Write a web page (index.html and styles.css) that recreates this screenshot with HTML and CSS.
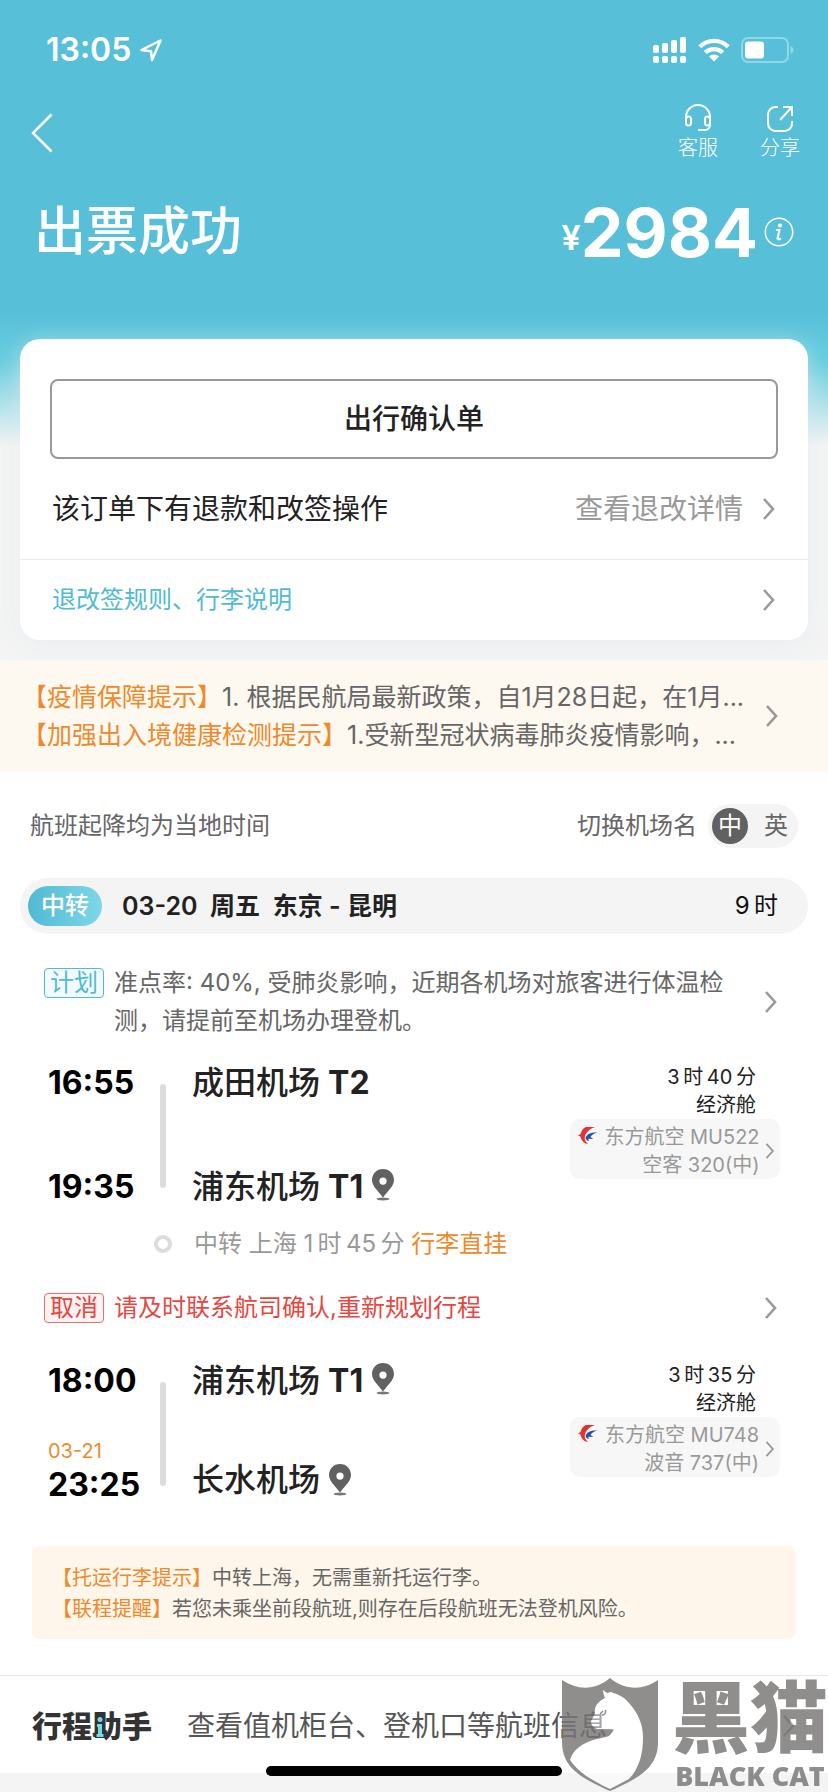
FILE: index.html
```html
<!DOCTYPE html>
<html lang="zh-CN">
<head>
    <meta charset="UTF-8">
    <meta name="viewport" content="width=device-width, initial-scale=1.0">
    <title>出票成功</title>
    <link rel="stylesheet" href="styles.css">
</head>
<body>

<!-- Shared icons -->
<svg class="sprite" aria-hidden="true">
    <symbol id="arrow" viewBox="0 0 14 24"><path d="M2 2l9 10-9 10" fill="none" stroke="#999" stroke-width="2.6"/></symbol>
    <symbol id="pin" viewBox="0 0 24 32">
        <path d="M12 0C5.600 0 1 4.800 1 11c0 6.500 6.500 11 11 17.500C16.500 22 23 17.500 23 11 23 4.800 18.400 0 12 0zm0 8.500a3.600 3.600 0 1 1 0 7.200 3.600 3.600 0 0 1 0-7.200z" fill="#616161" fill-rule="evenodd"/>
        <ellipse cx="12" cy="30" rx="6.500" ry="1.500" fill="#777"/>
    </symbol>
    <symbol id="airline" viewBox="0 0 22 20">
        <path d="M18 1H9C6 2 4.500 5 3.500 8L1 9.500l2.500 1C4 14.500 7 17.500 11 18c-2.500-2-4-5-3-8C9 6.500 13 2.500 18 1z" fill="#e5322d"/>
        <path d="M21 6.500c-6-.5-11 1-12.500 5.500.5 2 2 3 4 3-1.500-1-1.500-2-.5-2.500 1 .5 3 .5 4.500 0-1.500-.2-2.500-1-3-1.500 1.500-2.500 4-4 7.500-4.500z" fill="#2a4da3"/>
    </symbol>
</svg>

<div class="top">
    <!-- Status bar -->
    <div class="status-bar">
        <span class="clock">13:05</span>
        <svg width="24" height="24" viewBox="0 0 24 24"><path d="M21.500 2.500L2.500 12l9.500 1.200L13 22z" fill="none" stroke="#fff" stroke-width="2.500" stroke-linejoin="round"/></svg>
        <div class="status-icons">
            <svg width="34" height="28" viewBox="0 0 34 28" fill="#fff">
                <rect x="0" y="9" width="6" height="8" rx="2"/><rect x="9" y="7" width="6" height="10" rx="2"/><rect x="18" y="4" width="6" height="13" rx="2"/><rect x="27" y="1" width="6" height="16" rx="2"/>
                <rect x="0" y="20" width="6" height="7" rx="2"/><rect x="9" y="20" width="6" height="7" rx="2"/><rect x="18" y="20" width="6" height="7" rx="2"/><rect x="27" y="20" width="6" height="7" rx="2"/>
            </svg>
            <svg width="32" height="24" viewBox="0 0 32 24" fill="none" stroke="#fff" stroke-width="4.200">
                <path d="M1.800 8.800a20 20 0 0 1 28.400 0"/><path d="M7.300 14.600a12.500 12.500 0 0 1 17.400 0"/>
                <path d="M16 23.500l-5-5a7 7 0 0 1 10 0z" fill="#fff" stroke="none"/>
            </svg>
            <svg width="54" height="26" viewBox="0 0 54 26">
                <rect x="1" y="1" width="46" height="24" rx="6" fill="none" stroke="#8fd8e8" stroke-width="2"/>
                <rect x="4" y="4.500" width="19" height="17" rx="3" fill="#fff"/>
                <path d="M49.500 9c4 1.500 4 6.500 0 8z" fill="#8fd8e8"/>
            </svg>
        </div>
    </div>

    <nav class="nav">
        <button class="back" aria-label="返回">
            <svg width="24" height="40" viewBox="0 0 24 40"><path d="M21.500 1.500L3 20l18.500 18.500" fill="none" stroke="#fff" stroke-width="2.500"/></svg>
        </button>
        <button class="nav-btn">
            <svg width="28" height="28" viewBox="0 0 28 28" fill="none" stroke="#fff" stroke-width="2">
                <path d="M2 17v-4a12 12 0 0 1 24 0v8a5 5 0 0 1-5 5h-7"/>
                <rect x="2" y="12.500" width="5" height="9" rx="2.500"/><rect x="21" y="12.500" width="5" height="9" rx="2.500"/>
            </svg>
            <span>客服</span>
        </button>
        <button class="nav-btn">
            <svg width="28" height="28" viewBox="0 0 28 28" fill="none" stroke="#fff" stroke-width="2">
                <path d="M12 3H9.500A7.500 7.500 0 0 0 2 10.500v9A7.500 7.500 0 0 0 9.500 27h9a7.500 7.500 0 0 0 7.500-7.500V17"/>
                <path d="M17 3h9v9M26 3L14 16"/>
            </svg>
            <span>分享</span>
        </button>
    </nav>

    <header class="headline">
        <h1>出票成功</h1>
        <div class="price"><span class="yen">¥</span>2984</div>
        <button class="info" aria-label="价格说明">
            <svg width="30" height="30" viewBox="0 0 30 30" fill="none" stroke="#fff">
                <circle cx="15" cy="15" r="13.700" stroke-width="1.500"/>
                <circle cx="16" cy="8.500" r="2" fill="#fff" stroke="none"/>
                <path d="M12 13h3.500l-2 8.500q0 1.500 3.500.3" stroke-width="2"/>
            </svg>
        </button>
    </header>

    <section class="card">
        <button class="confirm-btn">出行确认单</button>
        <a class="card-row" href="#refund">
            <span>该订单下有退款和改签操作</span>
            <span class="more">查看退改详情</span>
            <svg class="arrow"><use href="#arrow"/></svg>
        </a>
        <a class="card-row rules" href="#rules">
            <span>退改签规则、行李说明</span>
            <svg class="arrow"><use href="#arrow"/></svg>
        </a>
    </section>
</div>

<a class="notice" href="#notice">
    <div class="notice-text">
        <p><b>【疫情保障提示】</b>1. 根据民航局最新政策，自1月28日起，在1月...</p>
        <p><b>【加强出入境健康检测提示】</b>1.受新型冠状病毒肺炎疫情影响，...</p>
    </div>
    <svg class="arrow"><use href="#arrow"/></svg>
</a>

<main class="flights">
    <div class="tz-row">
        <span>航班起降均为当地时间</span>
        <span class="switch-label">切换机场名</span>
        <div class="switch">
            <button class="active">中</button>
            <button>英</button>
        </div>
    </div>

    <div class="trip">
        <span class="trip-badge">中转</span>
        <h2>03-20&nbsp; 周五&nbsp; 东京 - 昆明</h2>
        <span>9&thinsp;时</span>
    </div>

    <a class="alert" href="#plan">
        <span class="tag">计划</span>
        <p>准点率: 40%, 受肺炎影响，近期各机场对旅客进行体温检测，请提前至机场办理登机。</p>
        <svg class="arrow"><use href="#arrow"/></svg>
    </a>

    <section class="leg">
        <div class="times"><time>16:55</time><time>19:35</time></div>
        <div class="bar"></div>
        <div class="airports">
            <h3>成田机场 <strong>T2</strong></h3>
            <h3>浦东机场 <strong>T1</strong><svg class="pin"><use href="#pin"/></svg></h3>
        </div>
        <div class="detail">
            <p>3&thinsp;时&thinsp;40&thinsp;分</p>
            <p>经济舱</p>
            <a class="plane" href="#mu522">
                <svg class="airline"><use href="#airline"/></svg>
                <span>东方航空 MU522<br>空客 320(中)</span>
                <svg class="arrow small"><use href="#arrow"/></svg>
            </a>
        </div>
    </section>

    <div class="transfer">
        <span class="ring"></span>
        <p>中转 上海 1&thinsp;时&thinsp;45&thinsp;分 <b>行李直挂</b></p>
    </div>

    <a class="alert cancel" href="#cancel">
        <span class="tag">取消</span>
        <p>请及时联系航司确认,重新规划行程</p>
        <svg class="arrow"><use href="#arrow"/></svg>
    </a>

    <section class="leg overnight">
        <div class="times"><time>18:00</time><time><small>03-21</small>23:25</time></div>
        <div class="bar"></div>
        <div class="airports">
            <h3>浦东机场 <strong>T1</strong><svg class="pin"><use href="#pin"/></svg></h3>
            <h3>长水机场<svg class="pin"><use href="#pin"/></svg></h3>
        </div>
        <div class="detail">
            <p>3&thinsp;时&thinsp;35&thinsp;分</p>
            <p>经济舱</p>
            <a class="plane" href="#mu748">
                <svg class="airline"><use href="#airline"/></svg>
                <span>东方航空 MU748<br>波音 737(中)</span>
                <svg class="arrow small"><use href="#arrow"/></svg>
            </a>
        </div>
    </section>

    <div class="tips">
        <p><b>【托运行李提示】</b>中转上海，无需重新托运行李。</p>
        <p><b>【联程提醒】</b>若您未乘坐前段航班,则存在后段航班无法登机风险。</p>
    </div>

    <a class="assistant" href="#assistant">
        <strong>行程<span class="zhu">助<svg width="10" height="22" viewBox="0 0 10 22" fill="#6fdbe9"><rect x="0" y="0" width="10" height="22" fill="#333"/><circle cx="5" cy="3.500" r="2.500"/><path d="M2 8h5v10h1.500v3h-7v-3H3v-7H2z"/></svg></span>手</strong>
        <span>查看值机柜台、登机口等航班信息</span>
        <svg class="arrow"><use href="#arrow"/></svg>
    </a>
</main>

<div class="home-bar"></div>

<!-- Watermark -->
<div class="watermark">
    <svg width="98" height="115" viewBox="0 0 98 115">
        <path d="M42 13l4 3 4-1c9 3 14 6 18 11 8 9 14 20 14 34 0 9-1 16-3 23-3 8-6 14-11 19l-19 11.500C30 104 17 95 9 83c2-7 7-12 12-15 5-3 10-5 15-6 5-1 9-2 12-3 2-2 4-4 4.700-6.700L36 52c-3-1-5-3-6-6 0-4 3-6 4-10-1-6 2-11 10-15-1-3-2-5-2-8z" fill="#fff" fill-opacity=".6"/>
        <path d="M1 3c16 11 34 10 48-2 14 12 32 13 48 2v62c0 24-16 35-48 49C17 100 1 89 1 65zM42 13c0 3 1 5 2 8-8 4-11 9-10 15-1 4-4 6-4 10 1 3 3 5 6 6l16.700.3C52 55 50 57 48 59c-3 1-7 2-12 3-5 1-10 3-15 6-5 3-10 8-12 15 8 12 21 20 40 29l19-10c5-5 8-11 11-19 2-7 3-14 3-23 0-14-6-25-14-34-4-5-9-8-18-11l-4 1z" fill="#787475" fill-rule="evenodd"/>
        <path d="M39 37l3-3M41 38c3 0 4-2 3.500-5" fill="none" stroke="#787475" stroke-width="1.500"/>
    </svg>
    <div class="watermark-text">
        <span class="cn">黑猫</span>
        <span class="en">BLACK CAT</span>
    </div>
</div>

</body>
</html>
```
FILE: styles.css
```css
* {
    box-sizing: border-box;
}

body {
    margin: 0;
    background: #f4f4f4;
    color: #222;
    font-family: Inter, "Noto Sans CJK SC", sans-serif;
    font-size: 24px;
    line-height: 38px;
}

h1, h2, h3, p {
    margin: 0;
}

a {
    color: inherit;
    text-decoration: none;
}

b {
    color: #ee8a2c;
    font-weight: 400;
}

button {
    padding: 0;
    border: none;
    background: none;
    color: inherit;
    font: inherit;
    cursor: pointer;
}

svg {
    display: block;
    flex: none;
}

.sprite {
    position: absolute;
    width: 0;
    height: 0;
}

.arrow {
    width: 14px;
    height: 24px;
}

.arrow.small {
    width: 10px;
    height: 18px;
}

/* Header */
.top {
    padding-bottom: 20px;
    background: linear-gradient(#58bfd9 0, #58bfd9 310px, #66cddf 360px, #f4f4f4 446px);
}

.status-bar {
    display: flex;
    align-items: center;
    gap: 8px;
    padding: 30px 33px 30px 46px;
    color: #fff;
    line-height: 40px;
}

.clock {
    font-size: 32px;
    font-weight: 600;
}

.status-icons {
    display: flex;
    align-items: center;
    gap: 11px;
    margin-left: auto;
}

.nav {
    display: flex;
    align-items: center;
    gap: 42px;
    padding: 4px 28px 28px 30px;
    color: #fff;
}

.back {
    margin-right: auto;
}

.nav-btn {
    display: flex;
    flex-direction: column;
    align-items: center;
    gap: 2px;
    font-size: 20px;
    font-weight: 300;
    line-height: 28px;
}

.headline {
    display: flex;
    align-items: center;
    padding: 0 34px;
    color: #fff;
    line-height: 84px;
}

.headline h1 {
    margin-right: auto;
    font-size: 52px;
    font-weight: 500;
}

.price {
    display: flex;
    align-items: center;
    font-size: 68px;
    font-weight: 700;
}

.yen {
    padding-top: 12px;
    font-size: 34px;
    font-weight: 600;
    line-height: 40px;
}

.info {
    margin-left: 6px;
}

/* Order card */
.card {
    margin: 65px 20px 0;
    border-radius: 20px;
    background: #fff;
    box-shadow: 0 4px 24px rgba(225, 235, 240, .6);
}

.card::before {
    content: "";
    display: block;
    height: 40px;
}

.confirm-btn {
    display: block;
    width: calc(100% - 60px);
    height: 80px;
    margin: 0 30px;
    border: 2px solid #999;
    border-radius: 8px;
    font-size: 28px;
    font-weight: 500;
}

.card-row {
    display: flex;
    align-items: center;
    justify-content: space-between;
    padding: 31px 32px;
    font-size: 28px;
}

.more {
    margin-left: auto;
    margin-right: 19px;
    color: #999;
}

.rules {
    padding: 21px 32px;
    border-top: 1px solid #ebebeb;
    color: #52bad3;
    font-size: 24px;
}

/* Notice */
.notice {
    display: flex;
    align-items: center;
    justify-content: space-between;
    padding: 18px 49px 18px 22px;
    background: #fdf8f0;
    color: #666;
    font-size: 25px;
}

.notice-text {
    min-width: 0;
    white-space: nowrap;
}

/* Flights */
.flights {
    padding-top: 32px;
    background: #fff;
    color: #666;
}

.tz-row {
    display: flex;
    align-items: center;
    padding: 0 30px;
}

.switch-label {
    margin-left: auto;
    margin-right: 11px;
}

.switch {
    display: flex;
    gap: 10px;
    padding: 4px;
    border-radius: 22px;
    background: #f4f4f4;
}

.switch button {
    width: 36px;
    height: 36px;
    border-radius: 50%;
    line-height: 36px;
}

.switch .active {
    background: #616161;
    color: #fff;
}

.trip {
    display: flex;
    align-items: center;
    margin: 30px 20px 30px;
    padding: 8px 30px 8px 8px;
    border-radius: 28px;
    background: #f4f4f4;
    color: #111;
}

.trip-badge {
    padding: 0 13px;
    border-radius: 20px;
    background: linear-gradient(90deg, #52b9d2, #7dd8e8);
    color: #fff;
    font-weight: 500;
    line-height: 40px;
}

.trip h2 {
    margin: 0 auto 0 20px;
    color: #222;
    font-size: 25px;
    font-weight: 600;
}

.alert {
    display: flex;
    align-items: center;
    padding: 0 50px 0 44px;
}

.alert p {
    flex: 1;
    margin: 0 32px 0 10px;
}

.tag {
    align-self: flex-start;
    margin-top: 4px;
    padding: 0 5px;
    border: 1px solid #52bad3;
    border-radius: 4px;
    background: #f3fafc;
    color: #52bad3;
    line-height: 28px;
}

.cancel {
    margin: 26px 0 34px;
    color: #e8463f;
}

.cancel .tag {
    border-color: #e8706b;
    background: #fdf3f3;
    color: #e8463f;
}

.leg {
    display: grid;
    grid-template-columns: 112px 6px 1fr 210px;
    margin-top: 23px;
    padding: 0 48px;
    color: #222;
}

.times, .airports {
    display: flex;
    flex-direction: column;
    justify-content: space-between;
    min-height: 144px;
    line-height: 40px;
}

.times {
    color: #000;
    font-size: 32px;
    font-weight: 700;
}

.times small {
    display: block;
    color: #ee8a2c;
    font-size: 20px;
    font-weight: 400;
    line-height: 28px;
}

.bar {
    margin: 21px 0 19px;
    border-radius: 3px;
    background: #dcdcdc;
}

.airports {
    padding-left: 26px;
}

.overnight .airports {
    padding-bottom: 5px;
}

.airports h3 {
    display: flex;
    align-items: center;
    gap: 8px;
    font-size: 32px;
    font-weight: 500;
}

.airports strong {
    font-weight: 700;
}

.pin {
    width: 24px;
    height: 32px;
}

.airports strong + .pin {
    margin-bottom: 4px;
}

.detail {
    font-size: 20px;
    line-height: 28px;
    text-align: right;
}

.detail p {
    padding-right: 24px;
}

.plane {
    display: flex;
    align-items: center;
    justify-content: space-between;
    padding: 4px 5px 0 7px;
    border-radius: 10px;
    background: #f7f7f7;
    color: #999;
}

.airline {
    width: 22px;
    height: 20px;
    margin-bottom: 30px;
}

.transfer {
    display: flex;
    align-items: center;
    gap: 22px;
    margin-top: 18px;
    padding-left: 154px;
    color: #999;
}

.ring {
    width: 18px;
    height: 18px;
    border: 4px solid #dcdcdc;
    border-radius: 50%;
}

.tips {
    margin: 41px 32px 36px;
    padding: 17px 20px 14px;
    border-radius: 8px;
    background: #fef6ea;
    font-size: 20px;
    line-height: 31px;
}

.assistant {
    display: flex;
    align-items: center;
    padding: 30px 32px 27px;
    border-top: 1px solid #e8e8e8;
    color: #555;
    font-size: 28px;
    line-height: 40px;
}

.assistant strong {
    margin-right: 35px;
    color: #333;
    font-size: 30px;
    font-weight: 900;
}

/* The "i" laid over the left part of the character */
.zhu {
    position: relative;
}

.zhu svg {
    position: absolute;
    left: 3px;
    top: 8px;
}

.assistant .arrow {
    margin-left: auto;
}

.home-bar {
    position: fixed;
    left: 50%;
    bottom: 16px;
    width: 296px;
    height: 10px;
    margin-left: -148px;
    border-radius: 5px;
    background: #000;
}

/* Watermark */
.watermark {
    position: fixed;
    right: 0;
    bottom: 0;
    display: flex;
    gap: 13px;
    color: #787475;
    opacity: .82;
}

.watermark-text {
    display: flex;
    flex-direction: column;
    align-items: center;
}

.cn {
    font-size: 78px;
    font-weight: 900;
    line-height: 84px;
}

.en {
    font-family: "Open Sans", sans-serif;
    font-size: 27px;
    font-weight: 800;
    line-height: 30px;
}
```
